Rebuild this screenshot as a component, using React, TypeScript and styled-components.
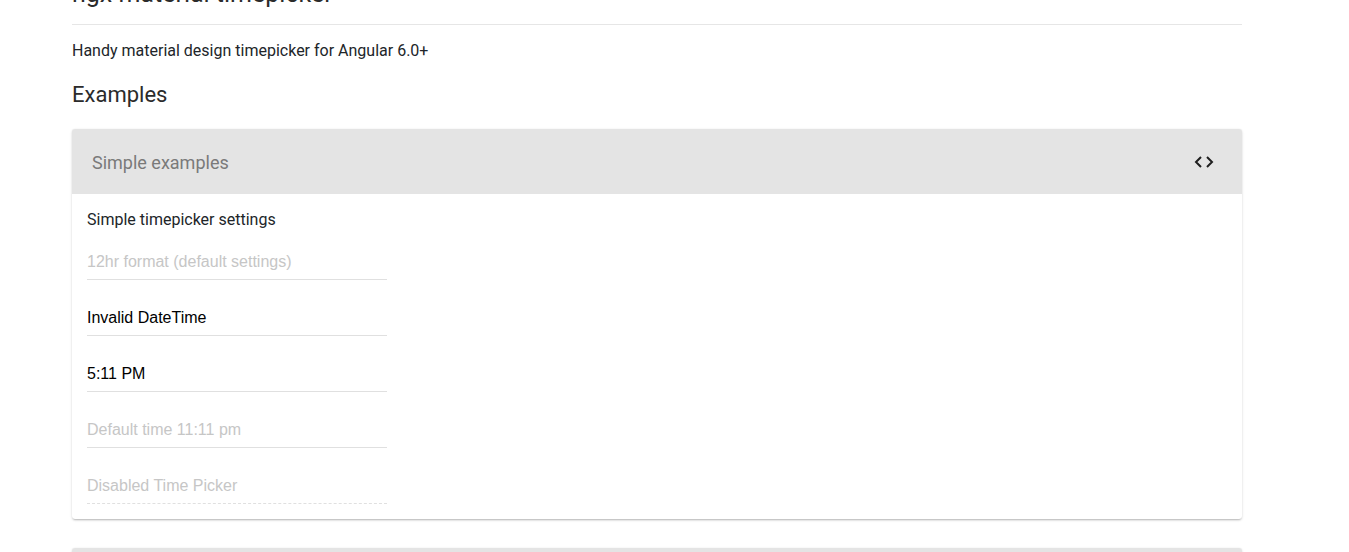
import React from 'react';
import styled, { createGlobalStyle } from 'styled-components';

const GlobalStyle = createGlobalStyle`
    body {
        margin: 0;
        background: #fff;
        font-family: Roboto, "Liberation Sans", sans-serif;
        color: #212529;
    }
`

const Page = styled.div`
    width: 1170px;
    margin-left: 72px;
`

const Title = styled.h1`
    margin: -20px 0 0;
    padding-bottom: 16px;
    font-size: 25px;
    line-height: 28px;
    font-weight: 400;
    color: #2b2b2b;
    border-bottom: 1px solid #e6e6e6;
`

const Lead = styled.p`
    margin: 14px 0 0;
    font-size: 16px;
    line-height: 24px;
`

const SectionTitle = styled.h2`
    margin: 19px 0 21px;
    font-size: 22px;
    line-height: 26px;
    font-weight: 400;
    color: #2b2b2b;
`

const Panel = styled.section`
    background: #fff;
    border-radius: 3px;
    overflow: hidden;
    margin-bottom: 29px;
    box-shadow: 0 2px 2px -1px rgba(0, 0, 0, 0.2), 0 1px 3px rgba(0, 0, 0, 0.12), 0 0 1px rgba(0, 0, 0, 0.1);
`

const PanelHeader = styled.header`
    box-sizing: border-box;
    height: 65px;
    display: flex;
    align-items: center;
    justify-content: space-between;
    padding: 1px 28px 0 20px;
    background: #e4e4e4;
    font-size: 18px;
    color: #7a7a7a;
`

const PanelBody = styled.div`
    padding: 14px 15px 15px;
`

const Subtitle = styled.div`
    font-size: 16px;
    line-height: 24px;
    color: #212529;
    margin-bottom: 11px;
`

const Field = styled.input<{ $dashed?: boolean }>`
    display: block;
    box-sizing: content-box;
    width: 300px;
    height: 34px;
    padding: 2px 0 0;
    margin: 0 0 19px;
    border: none;
    border-bottom: 1px ${p => (p.$dashed ? 'dashed' : 'solid')} #e0e0e0;
    background: transparent;
    font-family: "Liberation Sans", Arial, sans-serif;
    font-size: 16px;
    color: #000;
    outline: none;

    &:last-child {
        margin-bottom: 0;
    }

    &::placeholder {
        color: #c6c6c6;
    }

    &:disabled {
        color: #c6c6c6;
    }
`

function CodeIcon() {
    return (
        <svg width="20" height="12" viewBox="0 0 20 12" fill="none" stroke="#1f1f1f" strokeWidth="2">
            <path d="M7 1 L2 6 L7 11" />
            <path d="M13 1 L18 6 L13 11" />
        </svg>
    )
}

function App() {
    return (
        <>
            <GlobalStyle />
            <Page>
                <Title>ngx material timepicker</Title>
                <Lead>Handy material design timepicker for Angular 6.0+</Lead>
                <SectionTitle>Examples</SectionTitle>

                {/* simple examples */}
                <Panel>
                    <PanelHeader>
                        <span>Simple examples</span>
                        <CodeIcon />
                    </PanelHeader>
                    <PanelBody>
                        <Subtitle>Simple timepicker settings</Subtitle>
                        <Field placeholder="12hr format (default settings)" readOnly />
                        <Field defaultValue="Invalid DateTime" readOnly />
                        <Field defaultValue="5:11 PM" readOnly />
                        <Field placeholder="Default time 11:11 pm" readOnly />
                        <Field placeholder="Disabled Time Picker" disabled $dashed />
                    </PanelBody>
                </Panel>

                <Panel>
                    <PanelHeader>
                        <span>Custom settings</span>
                        <CodeIcon />
                    </PanelHeader>
                </Panel>
            </Page>
        </>
    )
}

export default App;
